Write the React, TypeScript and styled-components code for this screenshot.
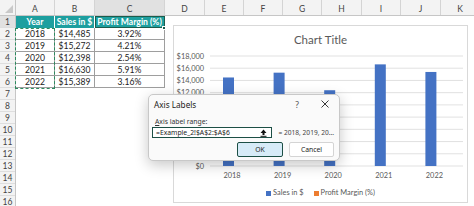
import React from "react"
import styled, { createGlobalStyle } from "styled-components"

const GlobalStyle = createGlobalStyle`
  html, body {
    margin: 0;
    padding: 0;
    background: #ffffff;
    overflow: hidden;
  }
  * { box-sizing: border-box; }
`

const columns = [
  { l: "A", w: 39 },
  { l: "B", w: 40 },
  { l: "C", w: 70 },
  { l: "D", w: 40 },
  { l: "E", w: 39 },
  { l: "F", w: 39 },
  { l: "G", w: 39 },
  { l: "H", w: 40 },
  { l: "I", w: 39 },
  { l: "J", w: 40 },
  { l: "K", w: 39 },
]

const rowNumbers = Array.from({ length: 16 }, (_, i) => i + 1)

const data = [
  { year: "2018", sales: "$14,485", margin: "3.92%", value: 14485 },
  { year: "2019", sales: "$15,272", margin: "4.21%", value: 15272 },
  { year: "2020", sales: "$12,398", margin: "2.54%", value: 12398 },
  { year: "2021", sales: "$16,630", margin: "5.91%", value: 16630 },
  { year: "2022", sales: "$15,389", margin: "3.16%", value: 15389 },
]

const App = () => {
  return (
    <>
      <GlobalStyle />
      <Sheet>
        <HeaderRow>
          <Corner>
            <CornerMark />
          </Corner>
          {columns.map((c) => (
            <ColHead key={c.l} w={c.w} active={c.l === "C"}>
              {c.l}
            </ColHead>
          ))}
        </HeaderRow>
        <Body>
          <RowHeads>
            {rowNumbers.map((n) => (
              <RowHead key={n} active={n === 1}>
                {n}
              </RowHead>
            ))}
          </RowHeads>
          <Cells>
            <Table>
              <HeadCell>Year</HeadCell>
              <HeadCell>Sales in $</HeadCell>
              <HeadCell active>
                Profit Margin (%)
                <FillHandle />
              </HeadCell>
              {data.map((d) => (
                <React.Fragment key={d.year}>
                  <Cell>{d.year}</Cell>
                  <Cell>{d.sales}</Cell>
                  <Cell>{d.margin}</Cell>
                </React.Fragment>
              ))}
              <Marquee />
            </Table>
          </Cells>
        </Body>

        <Chart>
          <ChartTitle>Chart Title</ChartTitle>
          <Plot width="293" height="136" viewBox="0 0 293 136">
            {Array.from({ length: 10 }, (_, i) => {
              const v = i * 2000
              const y = 119 - (v / 18000) * 110
              return (
                <g key={v}>
                  <line x1="36" x2="289" y1={y} y2={y} stroke="#d9d9d9" strokeWidth="0.8" />
                  <text x="30" y={y + 2.6} textAnchor="end" fontSize="7.4" fill="#595959">
                    {"$" + v.toLocaleString("en-US")}
                  </text>
                </g>
              )
            })}
            {data.map((d, i) => {
              const h = (d.value / 18000) * 110
              const x = 36 + i * 50.6 + 13
              return (
                <g key={d.year}>
                  <rect x={x} y={119 - h} width="11" height={h} fill="#4472c4" />
                  <text x={x + 9} y="131" textAnchor="middle" fontSize="7.4" fill="#595959">
                    {d.year}
                  </text>
                </g>
              )
            })}
          </Plot>
          <Legend>
            <LegendItem>
              <Swatch color="#4472c4" />
              Sales in $
            </LegendItem>
            <LegendItem>
              <Swatch color="#ed7d31" />
              Profit Margin (%)
            </LegendItem>
          </Legend>
        </Chart>

        <Dialog>
          <TitleBar>
            <DialogTitle>Axis Labels</DialogTitle>
            <TitleButtons>
              <TitleButton>?</TitleButton>
              <TitleButton>
                <svg width="8" height="8" viewBox="0 0 8 8">
                  <path d="M0.5 0.5 L7.5 7.5 M7.5 0.5 L0.5 7.5" stroke="#222" strokeWidth="0.9" />
                </svg>
              </TitleButton>
            </TitleButtons>
          </TitleBar>
          <DialogBody>
            <FieldLabel>
              <u>A</u>xis label range:
            </FieldLabel>
            <FieldRow>
              <RangeInput>
                <span>=Example_2!$A$2:$A$6</span>
                <svg width="7" height="8" viewBox="0 0 7 8">
                  <path d="M3.5 0.5 L6.5 4 L4.5 4 L4.5 6 L2.5 6 L2.5 4 L0.5 4 Z" fill="#111" />
                  <rect x="0.5" y="6.8" width="6" height="1" fill="#111" />
                </svg>
              </RangeInput>
              <Preview>= 2018, 2019, 20...</Preview>
            </FieldRow>
            <Buttons>
              <Button primary>OK</Button>
              <Button>Cancel</Button>
            </Buttons>
          </DialogBody>
        </Dialog>
      </Sheet>
    </>
  )
}

export default App

const Sheet = styled.div`
  position: relative;
  width: 474px;
  height: 206px;
  overflow: hidden;
  background: #ffffff;
  font-family: Lato, "Liberation Sans", sans-serif;
`

const HeaderRow = styled.div`
  display: flex;
  height: 16px;
  background: #f3f3f3;
  border-bottom: 1px solid #c6c6c6;
`

const Corner = styled.div`
  position: relative;
  width: 16px;
  flex: none;
  border-right: 1px solid #c6c6c6;
`

const CornerMark = styled.div`
  position: absolute;
  right: 2px;
  bottom: 2px;
  width: 0;
  height: 0;
  border-left: 8px solid transparent;
  border-bottom: 8px solid #c9c9c9;
`

const ColHead = styled.div<{ w: number; active?: boolean }>`
  width: ${(p) => p.w}px;
  flex: none;
  display: flex;
  align-items: flex-end;
  justify-content: center;
  padding-bottom: 1px;
  font-size: 8.5px;
  color: #444;
  background: ${(p) => (p.active ? "#e1e1e1" : "transparent")};
  border-right: 1px solid #d4d4d4;
`

const Body = styled.div`
  display: flex;
`

const RowHeads = styled.div`
  width: 16px;
  flex: none;
  display: flex;
  flex-direction: column;
  background: #f3f3f3;
  border-right: 1px solid #c6c6c6;
`

const RowHead = styled.div<{ active?: boolean }>`
  height: 12px;
  display: flex;
  align-items: center;
  justify-content: center;
  font-size: 8.5px;
  color: #444;
  background: ${(p) => (p.active ? "#e1e1e1" : "transparent")};
  border-bottom: 1px solid #dedede;
`

const Cells = styled.div`
  flex: 1;
`

const Table = styled.div`
  position: relative;
  display: grid;
  grid-template-columns: 39px 40px 70px;
  grid-auto-rows: 12px;
  width: 149px;
`

const HeadCell = styled.div<{ active?: boolean }>`
  position: relative;
  display: flex;
  align-items: center;
  justify-content: center;
  background: #1d9f9f;
  color: #ffffff;
  font-weight: 700;
  font-size: 8.6px;
  white-space: nowrap;
  border-right: 1px solid #ffffff;
  outline: ${(p) => (p.active ? "1.5px solid #1c5c4c" : "none")};
  outline-offset: -1px;
`

const FillHandle = styled.div`
  position: absolute;
  right: -2px;
  bottom: -2px;
  width: 4px;
  height: 4px;
  background: #1c5c4c;
  border: 1px solid #fff;
`

const Cell = styled.div`
  display: flex;
  align-items: center;
  justify-content: center;
  font-size: 8.6px;
  color: #222;
  border-right: 1px solid #9e9e9e;
  border-bottom: 1px solid #9e9e9e;
`

const Marquee = styled.div`
  position: absolute;
  left: -1px;
  top: 12px;
  width: 40px;
  height: 61px;
  border: 1px dashed #2e8b5f;
  pointer-events: none;
`

const Chart = styled.div`
  position: absolute;
  left: 173px;
  top: 25px;
  width: 295px;
  height: 178px;
  background: #ffffff;
  border: 1px solid #d9d9d9;
  display: flex;
  flex-direction: column;
  font-family: Lato, "Liberation Sans", sans-serif;
`

const ChartTitle = styled.div`
  margin-top: 7px;
  height: 14px;
  line-height: 14px;
  text-align: center;
  font-size: 11.5px;
  color: #595959;
`

const Plot = styled.svg`
  display: block;
  font-family: Lato, "Liberation Sans", sans-serif;
`

const Legend = styled.div`
  margin-top: 4px;
  display: flex;
  justify-content: center;
  gap: 10px;
  font-size: 7.4px;
  color: #595959;
  line-height: 12px;
`

const LegendItem = styled.div`
  display: flex;
  align-items: center;
  gap: 2px;
`

const Swatch = styled.span<{ color: string }>`
  width: 5px;
  height: 5px;
  background: ${(p) => p.color};
`

const Dialog = styled.div`
  position: absolute;
  left: 148px;
  top: 94px;
  width: 192px;
  height: 67px;
  background: #fafafa;
  border: 1px solid #c8c8c8;
  border-radius: 5px;
  box-shadow: 0 4px 14px rgba(0, 0, 0, 0.22);
  font-family: "Noto Sans", "Open Sans", sans-serif;
  color: #1b1b1b;
  display: flex;
  flex-direction: column;
`

const TitleBar = styled.div`
  display: flex;
  align-items: center;
  justify-content: space-between;
  height: 18px;
  padding-left: 5px;
`

const DialogTitle = styled.div`
  font-size: 8.2px;
`

const TitleButtons = styled.div`
  display: flex;
`

const TitleButton = styled.div`
  width: 28px;
  display: flex;
  align-items: center;
  justify-content: center;
  font-size: 8.5px;
  color: #555;
`

const DialogBody = styled.div`
  display: flex;
  flex-direction: column;
  padding: 0 5px 0 3px;
`

const FieldLabel = styled.div`
  margin-top: 4px;
  padding-left: 3px;
  font-size: 6.8px;
  line-height: 9px;
  color: #333;
`

const FieldRow = styled.div`
  display: flex;
  align-items: center;
  gap: 7px;
  margin-top: 1px;
`

const RangeInput = styled.div`
  width: 128px;
  height: 11px;
  display: flex;
  align-items: center;
  justify-content: space-between;
  padding: 0 4px 0 3px;
  border: 1.5px solid #1c4f45;
  background: #ffffff;
  font-size: 6.8px;
  color: #222;
`

const Preview = styled.div`
  font-size: 6.6px;
  color: #444;
  white-space: nowrap;
`

const Buttons = styled.div`
  display: flex;
  justify-content: flex-end;
  gap: 6px;
  margin-top: 4px;
`

const Button = styled.div<{ primary?: boolean }>`
  width: ${(p) => (p.primary ? 46 : 45)}px;
  height: 15px;
  display: flex;
  align-items: center;
  justify-content: center;
  font-size: 6.8px;
  background: ${(p) => (p.primary ? "#d6ebf7" : "#ffffff")};
  border: ${(p) => (p.primary ? "1.5px solid #1c4f45" : "1px solid #d4d4d4")};
  border-radius: 2px;
  color: #222;
`
